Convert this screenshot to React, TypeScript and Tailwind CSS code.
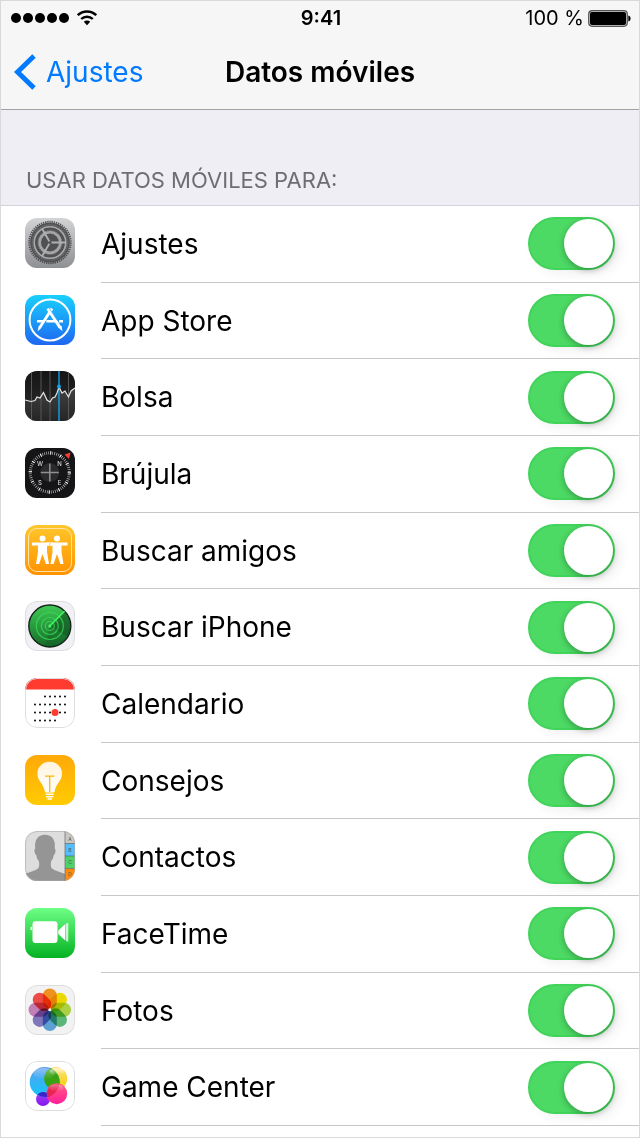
import React from 'react';

interface AppEntry {
  id: string;
  name: string;
  icon: React.ReactNode;
}

interface IconProps {
  children: React.ReactNode;
  border?: boolean;
}

const Icon: React.FC<IconProps> = ({ children, border }) => (
  <svg viewBox="0 0 50 50" aria-hidden="true" className="block size-[50px] shrink-0 overflow-hidden rounded-xl">
    {children}
    {border && <rect x="0.5" y="0.5" width="49" height="49" rx="11.5" fill="none" stroke="#dedee0" />}
  </svg>
);

const Gradient = ({ id, from, to }: { id: string; from: string; to: string }) => (
  <linearGradient id={id} x1="0" y1="0" x2="0" y2="1">
    <stop offset="0" stopColor={from} />
    <stop offset="1" stopColor={to} />
  </linearGradient>
);

const SettingsIcon = () => (
  <Icon>
    <defs><Gradient id="settings" from="#d3d4d6" to="#8e9093" /></defs>
    <rect width="50" height="50" fill="url(#settings)" />
    <circle cx="25" cy="24.5" r="20.8" fill="none" stroke="#4f4f51" strokeWidth="1.800" strokeDasharray="1.300 0.900" />
    <circle cx="25" cy="24.5" r="19.9" fill="#515153" />
    <circle cx="25" cy="24.5" r="17.6" fill="none" stroke="#77787a" strokeWidth="1.400" strokeDasharray="1 1" />
    <circle cx="25" cy="24.5" r="15.8" fill="none" stroke="#a9aaac" strokeWidth="1.600" />
    <circle cx="25" cy="24.5" r="10.3" fill="none" stroke="#a4a5a7" strokeWidth="2.600" />
    <circle cx="25" cy="24.5" r="11.800" fill="none" stroke="#a4a5a7" strokeWidth="1" strokeDasharray="1 1" />
    <path d="M25 24.500h15.800M25 24.500l-7.900-13.700M25 24.500l-7.900 13.700" stroke="#b0b1b3" strokeWidth="1.800" />
    <circle cx="25" cy="24.500" r="1.600" fill="#515153" />
  </Icon>
);

const AppStoreIcon = () => (
  <Icon>
    <defs><Gradient id="appstore" from="#19d0fd" to="#1e66f1" /></defs>
    <rect width="50" height="50" fill="url(#appstore)" />
    <circle cx="25" cy="25" r="20.4" fill="none" stroke="#fff" strokeWidth="2" />
    <g stroke="#fff" strokeWidth="2.8" fill="none">
      <path d="M27 13.5L14.8 32.5" />
      <path d="M22.8 13.5L35 32.5" strokeWidth="3.2" />
      <path d="M12 26.2h7.5M21.3 26.2h9M34 26.2h4" strokeWidth="2.4" />
    </g>
    <path d="M13.6 31.2l2.8 1.8-3.8 3.2zM33.6 32.8l3-2 .8 5.4z" fill="#fff" />
    <path d="M24 13l8 12" stroke="#25a4f9" strokeWidth="0.6" />
  </Icon>
);

const StocksIcon = () => (
  <Icon>
    <defs>
      <Gradient id="stocks" from="#151515" to="#2d2d2d" />
      <Gradient id="stocksArea" from="#5a5a5a" to="#1e1e1e" />
    </defs>
    <rect width="50" height="50" fill="url(#stocks)" />
    <path d="M0 29l6 1.500 4-1 2-3.500 3 1 3.500-5.500 3.500 7.500 3 2 2.500-4 2.500-1 2-4 2-6 3 6 3-2 3.500 6 2.500-6 4-3v34H0z" fill="url(#stocksArea)" opacity="0.6" />
    <path d="M6.500 0v50M16 0v50M25 0v50M43.500 0v50" stroke="#5c5c5c" strokeWidth="0.9" />
    <path d="M34 0v50" stroke="#149fe8" strokeWidth="1.400" />
    <path d="M0 29l6 1.500 4-1 2-3.500 3 1 3.500-5.500 3.500 7.500 3 2 2.500-4 2.500-1 2-4 2-6 3 6 3-2 3.500 6 2.500-6 4-3" fill="none" stroke="#e4e4e4" strokeWidth="1.200" />
    <circle cx="34" cy="15.500" r="2" fill="#149fe8" />
  </Icon>
);

const CompassIcon = () => (
  <Icon>
    <rect width="50" height="50" fill="#151517" />
    <circle cx="24.800" cy="24.500" r="19.500" fill="none" stroke="#b9b9b9" strokeWidth="3" strokeDasharray="0.700 1.340" />
    <circle cx="24.800" cy="24.500" r="19.500" fill="none" stroke="#fff" strokeWidth="3.400" strokeDasharray="0.900 9.310" />
    <circle cx="24.800" cy="24.500" r="9.500" fill="#2a2a2c" />
    <path d="M24.800 15.500v18M15.800 24.500h18" stroke="#8f8f8f" strokeWidth="1.500" />
    <g fill="#d8d8d8" fontFamily="Inter, sans-serif" fontSize="6" fontWeight="500" textAnchor="middle">
      <text x="15" y="17.500">W</text>
      <text x="34.500" y="17.500">N</text>
      <text x="15" y="37">S</text>
      <text x="34.500" y="37">E</text>
    </g>
    <path d="M45.500 4.500l-6 2 4.500 4.500z" fill="#ff3b30" />
  </Icon>
);

const friend = 'M-10.500-2.500h21v3h-6v6.500l2 12H3.400L0 9l-3.400 10h-3.100l2-12V.5h-6z';

const FriendsIcon = () => (
  <Icon>
    <defs><Gradient id="friends" from="#ffc72b" to="#ff9200" /></defs>
    <rect width="50" height="50" fill="url(#friends)" />
    <rect x="3.500" y="3.500" width="43" height="43" rx="8.500" fill="none" stroke="#ffe3a6" strokeWidth="1" />
    <g fill="#fff">
      <circle cx="17.500" cy="13.500" r="3" />
      <circle cx="32" cy="13.500" r="3" />
      <path transform="translate(17.500 20)" d={friend} />
      <path transform="translate(32 20)" d={friend} />
    </g>
    <path d="M25.300 17.500l-1 3" stroke="#ffb31b" strokeWidth="0.700" />
  </Icon>
);

const FindPhoneIcon = () => (
  <Icon border>
    <defs>
      <Gradient id="radar" from="#3fc955" to="#156b2a" />
    </defs>
    <rect width="50" height="50" fill="#f0f0f5" />
    <circle cx="24.800" cy="25" r="21" fill="url(#radar)" stroke="#14231a" strokeWidth="1.400" />
    <path d="M24.800 25L39.500 10.300A20.700 20.700 0 0 1 42.500 35.500z" fill="#0d421c" opacity="0.550" />
    <path d="M24.800 25L42.500 35.500A20.700 20.700 0 0 1 20 45z" fill="#0f5423" opacity="0.300" />
    <g fill="none" stroke="#36e153" strokeWidth="1.200" opacity="0.750">
      <circle cx="24.800" cy="25" r="4.500" />
      <circle cx="24.800" cy="25" r="8.500" />
      <circle cx="24.800" cy="25" r="13.500" />
    </g>
    <path d="M24.800 25L39.500 10.300" stroke="#46f565" strokeWidth="1.600" />
    <circle cx="24.800" cy="25" r="1.600" fill="#46f565" />
  </Icon>
);

// First and last column filled in each week of the calendar sheet
const weeks = [
  { y: 18.5, from: 2, to: 6 },
  { y: 26.5, from: 0, to: 6 },
  { y: 34.5, from: 0, to: 6 },
  { y: 42.5, from: 0, to: 4 },
];

const CalendarIcon = () => (
  <Icon border>
    <rect width="50" height="50" fill="#fff" />
    {weeks.map(({ y, from, to }) =>
      Array.from({ length: to - from + 1 }, (_, i) => (
        <circle key={`${y}-${i}`} cx={10 + (from + i) * 5} cy={y} r="1.050" fill="#111" />
      ))
    )}
    <circle cx="30" cy="34.500" r="3.500" fill="#ff3b30" />
    <rect width="50" height="11.500" fill="#ff3b30" />
  </Icon>
);

const TipsIcon = () => (
  <Icon>
    <defs>
      <Gradient id="tips" from="#ffa90a" to="#ffcb00" />
      <Gradient id="bulb" from="#fff4dc" to="#ffffff" />
    </defs>
    <rect width="50" height="50" fill="url(#tips)" />
    <path d="M24.700 6.700c-7 0-12.300 5.300-12.300 12 0 7.300 6.300 10 7.300 17.300.2 1 .8 1.500 1.800 1.500h6.400c1 0 1.600-.5 1.800-1.500C30.700 28.700 37 26 37 18.700c0-6.700-5.300-12-12.300-12z" fill="url(#bulb)" />
    <path d="M20 21.200h9.400M24.700 21.200V37" stroke="#ffb606" strokeWidth="1.300" />
    <path d="M20.700 39.300h8M21 41.700h7.400M22.500 44h4.400" stroke="#fff" strokeWidth="1.400" />
  </Icon>
);

const ContactsIcon = () => (
  <Icon>
    <rect width="50" height="50" fill="#dddddd" />
    <path d="M0 43c4-2 10-3 13-5.500 1.500-1.500 1.500-5 .8-7.500-1.500-1.500-2.300-4-2.500-6-1.800-1-2.600-5.500-1-6.500C9 9 13 3.800 20 3.800S31 9 29.700 17.500c1.600 1 .8 5.500-1 6.500-.2 2-1 4.500-2.500 6-.7 2.500-.7 6 .8 7.500C30 40 36 41 40 43v7H0z" fill="#959595" />
    <rect x="40" width="10" height="12.500" fill="#cbc6bf" />
    <rect x="40" y="12.500" width="10" height="12.500" fill="#54bffc" />
    <rect x="40" y="25" width="10" height="12.500" fill="#4cd265" />
    <rect x="40" y="37.500" width="10" height="12.500" fill="#ff8a0e" />
    <path d="M40 0v50M40 12.500h10M40 25h10M40 37.500h10" stroke="#5f6a6a" strokeWidth="0.700" />
    <g fill="#4e5a5e" fontFamily="Inter, sans-serif" fontSize="5" textAnchor="middle">
      <text x="45" y="9.500">A</text>
      <text x="45" y="21">B</text>
      <text x="45" y="33">C</text>
      <text x="45" y="44.500">D</text>
    </g>
    <rect x="0.500" y="0.500" width="49" height="49" rx="11.500" fill="none" stroke="#a8a8a8" opacity="0.600" />
  </Icon>
);

const FaceTimeIcon = () => (
  <Icon>
    <defs><Gradient id="facetime" from="#6dff86" to="#04b222" /></defs>
    <rect width="50" height="50" fill="url(#facetime)" />
    <g fill="#fff">
      <rect x="7.500" y="13.200" width="25" height="21.700" rx="3.200" />
      <rect x="5.500" y="18.700" width="1.600" height="3.500" rx="0.700" />
      <path d="M33.300 22.500l7-6.500v16.500l-7-6.500z" />
      <path d="M41 15.500l2.300-.8v19l-2.300-.8z" opacity="0.750" />
    </g>
  </Icon>
);

const petals = ['#fb9a1e', '#f7e400', '#b5dc4a', '#5fc07d', '#62a9e0', '#877cc4', '#cc86c0', '#f8504a'];

const PhotosIcon = () => (
  <Icon border>
    <rect width="50" height="50" fill="#f2f2f2" />
    {petals.map((color, i) => (
      <rect
        key={color}
        x="17.800"
        y="3.500"
        width="14"
        height="20.500"
        rx="7"
        fill={color}
        transform={`rotate(${i * 45} 24.800 24.800)`}
        className="mix-blend-multiply"
      />
    ))}
    <circle cx="24.800" cy="24.800" r="1.500" fill="#fff" opacity="0.900" />
  </Icon>
);

const GameCenterIcon = () => (
  <Icon border>
    <defs>
      <Gradient id="blueBall" from="#5a9df0" to="#10c8fb" />
      <Gradient id="yellowBall" from="#ffe27a" to="#f2ce00" />
      <Gradient id="pinkBall" from="#ff5a80" to="#ff1f98" />
      <Gradient id="purpleBall" from="#a13ff2" to="#8418ef" />
      <Gradient id="shine" from="#ffffff" to="#ffffff00" />
      <clipPath id="blueClip"><circle cx="19.700" cy="21" r="15" /></clipPath>
    </defs>
    <rect width="50" height="50" fill="#fff" />
    <circle cx="30.700" cy="17.500" r="11.500" fill="url(#yellowBall)" />
    <circle cx="18" cy="38" r="7" fill="url(#purpleBall)" />
    <circle cx="19.700" cy="21" r="15" fill="url(#blueBall)" />
    <circle cx="30.700" cy="17.500" r="11.500" fill="#3aa315" clipPath="url(#blueClip)" />
    <circle cx="31.700" cy="32.700" r="10.500" fill="url(#pinkBall)" />
    <path d="M12.500 33.800a15 15 0 0 0 12 1.500 7 7 0 0 0-12-1.500z" fill="#3c22c9" />
    <path d="M22 35.900a15 15 0 0 0 12.300-12.500 10.500 10.500 0 0 0-12.300 12.500z" fill="#e8264f" />
    <ellipse cx="19" cy="12.500" rx="10.500" ry="5.500" fill="url(#shine)" opacity="0.350" />
    <ellipse cx="32" cy="10.500" rx="7.500" ry="3.500" fill="url(#shine)" opacity="0.650" />
    <ellipse cx="31.700" cy="27" rx="7" ry="3.500" fill="url(#shine)" opacity="0.350" />
  </Icon>
);

const apps: AppEntry[] = [
  { id: 'ajustes', name: 'Ajustes', icon: <SettingsIcon /> },
  { id: 'app-store', name: 'App Store', icon: <AppStoreIcon /> },
  { id: 'bolsa', name: 'Bolsa', icon: <StocksIcon /> },
  { id: 'brujula', name: 'Brújula', icon: <CompassIcon /> },
  { id: 'buscar-amigos', name: 'Buscar amigos', icon: <FriendsIcon /> },
  { id: 'buscar-iphone', name: 'Buscar iPhone', icon: <FindPhoneIcon /> },
  { id: 'calendario', name: 'Calendario', icon: <CalendarIcon /> },
  { id: 'consejos', name: 'Consejos', icon: <TipsIcon /> },
  { id: 'contactos', name: 'Contactos', icon: <ContactsIcon /> },
  { id: 'facetime', name: 'FaceTime', icon: <FaceTimeIcon /> },
  { id: 'fotos', name: 'Fotos', icon: <PhotosIcon /> },
  { id: 'game-center', name: 'Game Center', icon: <GameCenterIcon /> },
];

const StatusBar = () => (
  <div className="grid grid-cols-3 items-center pl-2.5 pr-2 text-xl leading-[34px]">
    <div className="flex items-center gap-2">
      <div className="flex gap-0.5">
        {[1, 2, 3, 4, 5].map((dot) => (
          <span key={dot} className="size-2.5 rounded-full bg-black" />
        ))}
      </div>
      <svg width="20" height="16" viewBox="0 0 20 16" fill="none" stroke="#000" strokeWidth="2.400" aria-hidden="true">
        <path d="M.8 5.200a13.200 13.200 0 0 1 18.400 0" />
        <path d="M4.200 9a8.400 8.400 0 0 1 11.600 0" />
        <path d="M6.800 11.800a4.600 4.600 0 0 1 6.400 0L10 15.200z" fill="#000" stroke="none" />
      </svg>
    </div>
    <div className="text-center font-semibold">9:41</div>
    <div className="flex items-center justify-end gap-1">
      <span>100 %</span>
      <svg width="43" height="17" viewBox="0 0 43 17" aria-hidden="true">
        <rect x="0.700" y="0.700" width="38.600" height="15.600" rx="3.500" fill="#ccc" stroke="#555" strokeWidth="1.200" />
        <rect x="2" y="2" width="36" height="13" rx="2" fill="#000" />
        <path d="M40.300 5.500c3 .6 3 5.400 0 6z" fill="#000" />
      </svg>
    </div>
  </div>
);

const AppRow: React.FC<{ app: AppEntry }> = ({ app }) => (
  <li className="flex grow items-stretch gap-[26px] pl-6">
    <div className="flex items-center pb-[3px]">{app.icon}</div>
    <div className="flex flex-1 items-center justify-between border-b border-[#c8c7cc] pr-6">
      <label htmlFor={app.id} className="text-[28px] leading-9">{app.name}</label>
      <input
        id={app.id}
        type="checkbox"
        role="switch"
        defaultChecked
        className="flex h-[53px] w-[87px] appearance-none items-center rounded-full border-2 border-[#e5e5ea] bg-white shadow-[6px_4px_12px_rgba(0,0,0,0.06)] transition-colors before:block before:size-[49px] before:rounded-full before:bg-white before:shadow-[0_2px_6px_rgba(0,0,0,0.3)] checked:justify-end checked:border-[#40d45a] checked:bg-[#4cd964]"
      />
    </div>
  </li>
);

export default function App() {
  return (
    <div className="flex min-h-screen flex-col border border-[#d9d9db] bg-white font-['Inter',sans-serif] text-black">
      <header className="border-b border-[#a3a3a5] bg-[#f6f6f6]">
        <StatusBar />
        <nav className="grid grid-cols-[1fr_auto_1fr] items-center px-[13px] pt-[15px] pb-[15px] text-[28px] leading-11">
          <a href="#ajustes" className="flex items-center gap-2.5 text-[#007aff]">
            <svg width="22" height="36" viewBox="0 0 22 36" fill="none" stroke="currentColor" strokeWidth="5" aria-hidden="true">
              <path d="M20 2L3.500 18 20 34" />
            </svg>
            Ajustes
          </a>
          <h1 className="font-semibold">Datos móviles</h1>
        </nav>
      </header>
      <main className="flex grow flex-col">
        <h2 className="border-b border-[#d3d2d8] bg-[#efeef4] px-[25px] pt-[55px] pb-2.5 text-[22px] leading-[30px] text-[#6d6d72]">
          USAR DATOS MÓVILES PARA:
        </h2>
        <ul className="flex grow flex-col pb-[11px]">
          {apps.map((app) => (
            <AppRow key={app.id} app={app} />
          ))}
        </ul>
      </main>
    </div>
  );
}
